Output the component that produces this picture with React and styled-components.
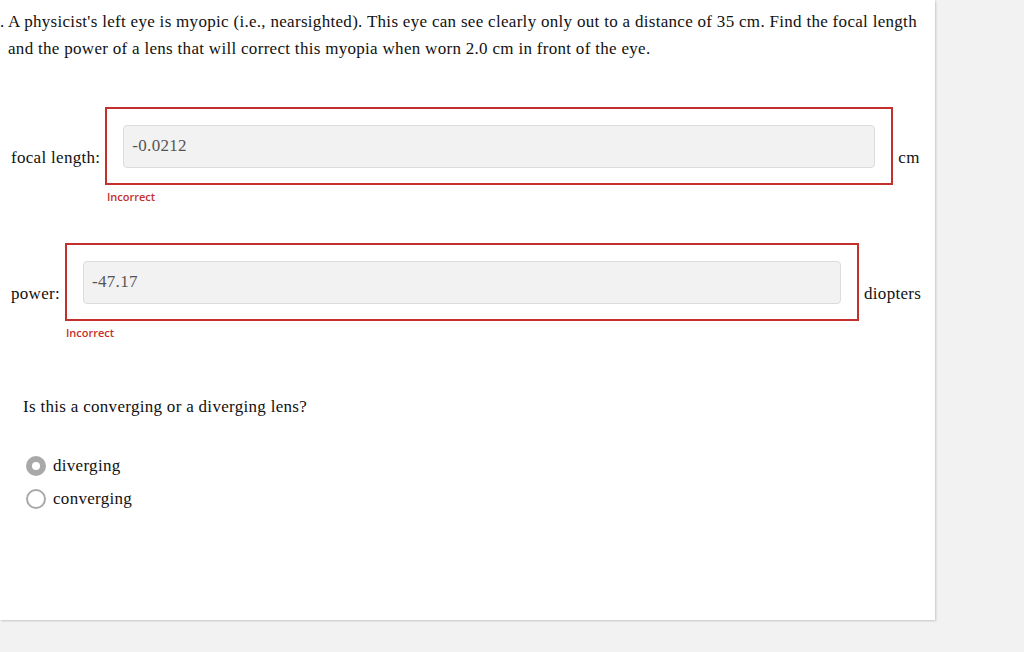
import React, { useState } from 'react';
import styled, { createGlobalStyle } from 'styled-components';

const GlobalStyle = createGlobalStyle`
    html, body {
        margin: 0;
        padding: 0;
        background: #f2f2f2;
    }
    body {
        font-family: "Liberation Serif", "Times New Roman", serif;
        color: #111;
    }
`

const answers = [
    { label: 'focal length:', value: '-0.0212', unit: 'cm', indent: 107, width: 788 },
    { label: 'power:', value: '-47.17', unit: 'diopters', indent: 66, width: 794 },
];

const options = ['diverging', 'converging'];

const App = () => {
    const [choice, setChoice] = useState('diverging');

    return (
        <Page>
            <GlobalStyle />
            <Panel>
                <Question>
                    <Marker>.</Marker>A physicist's left eye is myopic (i.e., nearsighted). This eye can see clearly only out to a distance of 35 cm. Find the focal length and the power of a lens that will correct this myopia when worn 2.0 cm in front of the eye.
                </Question>
                {answers.map((a) => (
                    <AnswerBlock key={a.label}>
                        <AnswerRow>
                            <Label>{a.label}</Label>
                            <FieldBox $width={a.width}>
                                <Field readOnly value={a.value} />
                            </FieldBox>
                            <Unit>{a.unit}</Unit>
                        </AnswerRow>
                        <Feedback $indent={a.indent}>Incorrect</Feedback>
                    </AnswerBlock>
                ))}
                <Prompt>Is this a converging or a diverging lens?</Prompt>
                <Options>
                    {options.map((opt) => (
                        <Option key={opt} onClick={() => setChoice(opt)}>
                            <Radio $checked={choice === opt} />
                            <span>{opt}</span>
                        </Option>
                    ))}
                </Options>
            </Panel>
        </Page>
    )
}

const Page = styled.div`
    width: 1024px;
    height: 652px;
    background: #f2f2f2;
    overflow: hidden;
`

const Panel = styled.div`
    width: 935px;
    height: 620px;
    background: #ffffff;
    box-shadow: 1px 1px 2px rgba(0, 0, 0, 0.18);
    overflow: hidden;
    box-sizing: border-box;
    padding: 8px 0 0 0;
    font-size: 17px;
    letter-spacing: 0.3px;
`

const Question = styled.p`
    margin: 0 0 6px 0;
    padding: 0 8px;
    line-height: 27px;
    width: 935px;
    box-sizing: border-box;
`

const Marker = styled.span`
    display: inline-block;
    margin-left: -8px;
    width: 8px;
`

const AnswerBlock = styled.div`
    display: flex;
    flex-direction: column;
`

const AnswerRow = styled.div`
    display: flex;
    align-items: center;
    padding-left: 11px;
    margin-top: 39px;
`

const Label = styled.span`
    margin-right: 5px;
    padding-top: 24px;
`

const FieldBox = styled.div`
    width: ${({ $width }) => $width}px;
    height: 78px;
    box-sizing: border-box;
    border: 2px solid #c4302d;
    display: flex;
    align-items: center;
    padding: 0 16px;
`

const Field = styled.input`
    flex: 1;
    height: 43px;
    box-sizing: border-box;
    border: 1px solid #dcdcdc;
    border-radius: 4px;
    background: #f2f2f2;
    font-family: "Liberation Serif", "Times New Roman", serif;
    font-size: 17px;
    letter-spacing: 0.3px;
    color: #555;
    padding: 0 8px 1px 8px;
    outline: none;
`

const Unit = styled.span`
    margin-left: 5px;
    padding-top: 24px;
`

const Feedback = styled.div`
    margin-left: ${({ $indent }) => $indent}px;
    margin-top: 4px;
    font-family: "Open Sans", "Liberation Sans", sans-serif;
    font-weight: 600;
    font-size: 11px;
    letter-spacing: 0;
    color: #c4302d;
`

const Prompt = styled.p`
    margin: 57px 0 0 23px;
`

const Options = styled.div`
    display: flex;
    flex-direction: column;
    gap: 13px;
    margin: 39px 0 0 26px;
`

const Option = styled.label`
    display: flex;
    align-items: center;
    gap: 7px;
    cursor: pointer;
`

const Radio = styled.span`
    width: 20px;
    height: 20px;
    box-sizing: border-box;
    border-radius: 50%;
    border: ${({ $checked }) => ($checked ? '6px solid #a9a9a9' : '2px solid #a9a9a9')};
    background: #fff;
`

export default App
